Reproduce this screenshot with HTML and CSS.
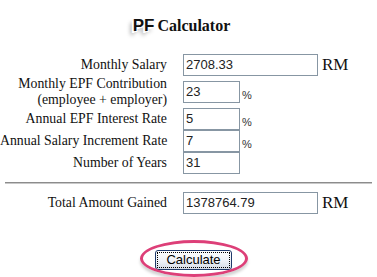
FILE: index.html
```html
<!DOCTYPE html>
<html>
<head>
<meta charset="utf-8">
<link rel="stylesheet" href="styles.css">
</head>
<body>
<div class="page">
  <h1 class="title"><span class="pf">PF</span> <span class="calc">Calculator</span></h1>
  <div class="form">
    <label class="lbl">Monthly Salary</label>
    <div class="field"><div class="inp wide">2708.33</div><span class="rm">RM</span></div>
    <label class="lbl two">Monthly EPF Contribution<br>(employee + employer)</label>
    <div class="field"><div class="inp small">23</div><span class="pct">%</span></div>
    <label class="lbl">Annual EPF Interest Rate</label>
    <div class="field"><div class="inp small">5</div><span class="pct">%</span></div>
    <label class="lbl">Annual Salary Increment Rate</label>
    <div class="field"><div class="inp small">7</div><span class="pct">%</span></div>
    <label class="lbl">Number of Years</label>
    <div class="field"><div class="inp small">31</div></div>
  </div>
  <div class="sep"></div>
  <div class="form total">
    <label class="lbl">Total Amount Gained</label>
    <div class="field"><div class="inp wide">1378764.79</div><span class="rm">RM</span></div>
  </div>
  <div class="actions">
    <div class="btnwrap">
      <button class="btn"><span class="focus">Calculate</span></button>
      <div class="ring"></div>
    </div>
  </div>
</div>
</body>
</html>
```
FILE: styles.css
```css
html, body { margin: 0; padding: 0; background: #fff; }
body { font-family: "Liberation Serif", "Times New Roman", serif; font-size: 13.8px; color: #111; overflow: hidden; }
.page { width: 377px; height: 277px; position: relative; }
.title { margin: 0; padding: 11px 0 0 0; height: 40px; box-sizing: border-box; display: flex; justify-content: center; align-items: center; padding-right: 14px; font-size: 16px; font-weight: bold; line-height: 20px; }
.pf { font-family: "Liberation Sans", Arial, sans-serif; font-size: 17px; color: #111; text-shadow: -2px 2px 0 #fff, 1px 1px 0 #fff, -3px 4px 4px #9a9a9a; margin-right: 3px; }
.calc { font-family: "Liberation Serif", serif; }
.form { display: grid; grid-template-columns: 167px auto; column-gap: 16px; align-items: center; margin-top: 14px; }
.lbl { text-align: right; line-height: 16px; white-space: nowrap; }
.field { display: flex; align-items: center; }
.inp { height: 22px; box-sizing: border-box; border: 1px solid #8796a3; font-family: "Liberation Sans", Arial, sans-serif; font-size: 13px; line-height: 20px; padding-left: 2px; color: #222; background: #fff; }
.wide { width: 135px; }
.small { width: 57px; }
.rm { font-size: 17px; margin-left: 4px; color: #111; }
.pct { font-family: "Liberation Sans", Arial, sans-serif; font-size: 11px; margin-left: 2px; margin-top: 5px; color: #333; }
.sep { height: 1px; background: #8c8c8c; margin: 8px 5px 0 5px; border-bottom: 1px solid #c8c8c8; }
.total { margin-top: 8px; }
.actions { display: flex; justify-content: center; padding-left: 10px; margin-top: 36px; }
.btnwrap { position: relative; }
.btn { width: 77px; height: 20px; padding: 1px; border: 1px solid #1f3a6a; border-radius: 3px; background: linear-gradient(#ffffff, #ecf0f6 60%, #d4dbe6); font-family: "Liberation Sans", Arial, sans-serif; font-size: 13px; color: #000; display: flex; }
.focus { flex: 1; border: 1px dotted #000; line-height: 14px; text-align: center; }
.ring { position: absolute; left: -15px; top: -10px; width: 108px; height: 37px; box-sizing: border-box; border: 3px solid #dd3f78; border-radius: 50%; box-shadow: 0 3px 3px rgba(0,0,0,0.18); }
```
